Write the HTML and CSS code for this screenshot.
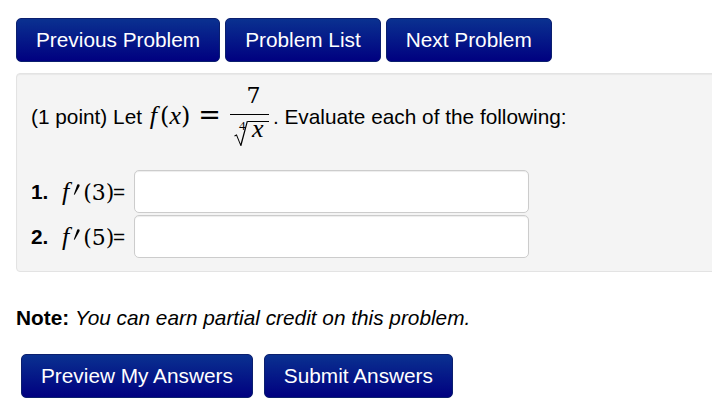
FILE: index.html
```html
<!DOCTYPE html>
<html>
<head>
<meta charset="utf-8">
<link rel="stylesheet" href="styles.css">
</head>
<body>
<div class="page">
  <div class="nav">
    <button class="btn">Previous Problem</button>
    <button class="btn">Problem List</button>
    <button class="btn">Next Problem</button>
  </div>
  <div class="well">
    <div class="stmt">(1 point) Let <span class="math"><span class="mi f">f</span><span class="mo">(</span><span class="mi">x</span><span class="mo">)</span><span class="eq">=</span><span class="frac"><span class="num">7</span><span class="den"><span class="idx">4</span><svg class="rad" width="14" height="25" viewBox="0 0 14 25"><path d="M0.3 14.6 L2.8 13.3 L6.6 22.7 L12.8 0 L14 0 L7.4 25 L6.5 25 L2.3 14.7 L0.7 15.5 Z" fill="#000"/></svg><span class="radicand"><span class="mi">x</span></span></span></span></span>. Evaluate each of the following:</div>
    <div class="answers">
      <div class="row">
        <span class="lbl">1.</span>
        <span class="math small"><span class="mi f">f</span><svg class="prime" width="7" height="11" viewBox="0 0 7 11"><path d="M4.3 0.4 Q6.9 -0.4 6.6 1.9 L1.7 10.8 L0.8 10.4 Z" fill="#000"/></svg><span class="mo">(</span><span class="mn">3</span><span class="mo">)</span></span><span class="equals">=</span>
        <input class="field" type="text">
      </div>
      <div class="row">
        <span class="lbl">2.</span>
        <span class="math small"><span class="mi f">f</span><svg class="prime" width="7" height="11" viewBox="0 0 7 11"><path d="M4.3 0.4 Q6.9 -0.4 6.6 1.9 L1.7 10.8 L0.8 10.4 Z" fill="#000"/></svg><span class="mo">(</span><span class="mn">5</span><span class="mo">)</span></span><span class="equals">=</span>
        <input class="field" type="text">
      </div>
    </div>
  </div>
  <p class="note"><b>Note:</b> <i>You can earn partial credit on this problem.</i></p>
  <div class="submit">
    <button class="btn">Preview My Answers</button>
    <button class="btn">Submit Answers</button>
  </div>
</div>
</body>
</html>
```
FILE: styles.css
```css
html, body {
  margin: 0;
  padding: 0;
  background: #fff;
  overflow: hidden;
}
body {
  font-family: "Liberation Sans", Arial, sans-serif;
  font-size: 20.8px;
  color: #000;
}
.page {
  padding: 18px 0 0 16px;
}
.nav {
  display: flex;
  gap: 5px;
}
.btn {
  font-family: "Liberation Sans", Arial, sans-serif;
  font-size: 20.8px;
  color: #fff;
  background: linear-gradient(#0a3190, #000080);
  border: 1px solid #0b1f6e;
  border-radius: 5px;
  height: 44px;
  padding: 0 19px;
  margin: 0;
}
.well {
  box-sizing: border-box;
  margin: 11px -20px 0 0;
  background: #f4f4f4;
  border: 1px solid #e3e3e3;
  border-radius: 4px;
  box-shadow: inset 0 1px 1px rgba(0,0,0,0.05);
  padding: 14px 14px 0 14px;
  height: 199px;
}
.stmt {
  line-height: 27px;
  white-space: nowrap;
  height: 82px;
}
.math {
  font-family: "Liberation Serif", "Times New Roman", serif;
  font-size: 26px;
}
.mi {
  font-style: italic;
}
.f {
  margin-left: 2px;
  margin-right: 3px;
}
.mo, .mn, .eq, .num {
  font-family: "DejaVu Serif", serif;
  font-style: normal;
}
.mo {
  font-size: 24px;
}
.mn {
  font-size: 22px;
}
.eq {
  font-size: 27px;
  margin: 0 9px 0 8px;
}
.frac {
  display: inline-flex;
  flex-direction: column;
  vertical-align: middle;
  width: 39px;
  margin-right: 4px;
  position: relative;
  top: -3px;
}
.num {
  display: block;
  width: 31px;
  padding-left: 8px;
  text-align: center;
  font-size: 22px;
  line-height: 22px;
  height: 22px;
  padding-bottom: 7px;
  box-sizing: content-box;
  border-bottom: 1.4px solid #000;
}
.den {
  display: flex;
  align-items: flex-start;
  height: 31px;
  padding: 6px 0 0 4px;
  box-sizing: border-box;
}
.idx {
  font-family: "Liberation Serif", serif;
  font-size: 13px;
  line-height: 10px;
  width: 7px;
  margin-left: 5px;
  margin-right: -12px;
  position: relative;
  z-index: 1;
}
.rad {
  display: block;
  flex: none;
}
.radicand {
  display: block;
  border-top: 1.4px solid #000;
  line-height: 13px;
  height: 22px;
  width: 21px;
  box-sizing: border-box;
  padding-left: 4px;
  font-size: 26px;
}
.answers {
  display: flex;
  flex-direction: column;
  gap: 2px;
}
.row {
  display: flex;
  align-items: center;
  height: 43px;
}
.lbl {
  font-weight: bold;
  width: 29px;
  flex: none;
}
.math.small {
  display: inline-flex;
  align-items: baseline;
  width: 53px;
  flex: none;
}
.math.small .f {
  margin-left: 2px;
  margin-right: 4px;
}
.prime {
  display: block;
  flex: none;
  position: relative;
  top: -5px;
  margin-right: 3px;
}
.math.small .mo {
  font-size: 22px;
}
.math.small .mn {
  margin: 0;
}
.equals {
  width: 21px;
  flex: none;
}
.field {
  box-sizing: border-box;
  width: 395px;
  height: 43px;
  margin: 0;
  border: 1px solid #cccccc;
  border-radius: 5px;
  background: #fff;
  box-shadow: inset 0 1px 1px rgba(0,0,0,0.075);
  font-size: 20px;
  padding: 4px 8px;
}
.note {
  margin: 33px 0 0 0;
  line-height: 26px;
}
.submit {
  display: flex;
  gap: 11px;
  margin: 23px 0 0 5px;
}
```
